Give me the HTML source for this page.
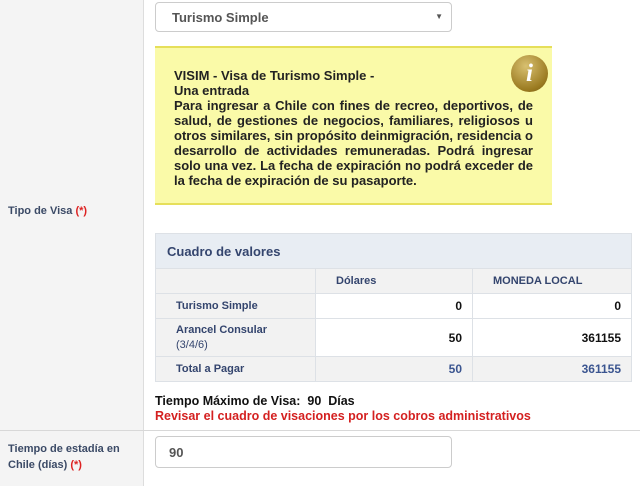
<!DOCTYPE html>
<html><head><meta charset="utf-8"><style>
*{box-sizing:border-box;margin:0;padding:0}
body{width:640px;height:486px;overflow:hidden;background:#fff;font-family:"Liberation Sans",Arial,sans-serif;position:relative}
.left{position:absolute;left:0;top:0;width:144px;height:486px;background:#f4f4f4;border-right:1px solid #ddd}
.hr{position:absolute;left:0;top:430px;width:640px;height:1px;background:#d8d8d8}
.lbl{position:absolute;left:8px;font-size:11px;font-weight:bold;color:#3b4a66;line-height:16px}
.lbl span{color:#d22}
.sel{position:absolute;left:155px;top:2px;width:297px;height:30px;border:1px solid #ccc;border-radius:4px;background:#fff;font-size:13px;font-weight:bold;color:#555;padding:7px 16px}
.sel i{position:absolute;right:8px;top:9px;font-style:normal;font-size:8px;color:#555}
.info{position:absolute;left:155px;top:46px;width:397px;height:159px;background:#fafaa8;border-top:2px solid #e6df5a;border-bottom:2px solid #e6df5a;padding:20px 19px 0 19px;font-size:13px;font-weight:bold;color:#222;line-height:15px;text-align:justify}
.ico{position:absolute;left:511px;top:55px;width:37px;height:37px;border-radius:50%;background:radial-gradient(circle at 40% 30%,#d8c070,#9a7a20 70%,#6e5410);color:#fff;font:italic bold 25px "Liberation Serif",serif;text-align:center;line-height:37px}
table{position:absolute;left:155px;top:233px;width:477px;border-collapse:collapse;font-size:11px;font-weight:bold;color:#34456e}
td{border:1px solid #dde1e6;height:25px;padding:0 20px}
.cap td{background:#e8edf3;height:35px;font-size:13px;color:#34456e;padding-left:11px}
.hd td{background:#f2f2f2}
.g{background:#f2f2f2}
.n{text-align:right;color:#111;font-size:12px;padding-right:10px}
.t .n{color:#3b5590}
.tx{position:absolute;left:155px;font-size:12.5px;font-weight:bold;line-height:15px}
.inp{position:absolute;left:155px;top:436px;width:297px;height:32px;border:1px solid #ccc;border-radius:4px;font-size:13px;font-weight:bold;color:#555;padding:8px 13px}
</style></head><body>
<div class="left"></div>
<div class="hr"></div>
<div class="lbl" style="top:203px">Tipo de Visa <span>(*)</span></div>
<div class="lbl" style="top:441px">Tiempo de estadía en<br>Chile (días) <span>(*)</span></div>
<div class="sel">Turismo Simple<i>▼</i></div>
<div class="info">VISIM - Visa de Turismo Simple -<br>Una entrada<br>Para ingresar a Chile con fines de recreo, deportivos, de salud, de gestiones de negocios, familiares, religiosos u otros similares, sin propósito deinmigración, residencia o desarrollo de actividades remuneradas. Podrá ingresar solo una vez. La fecha de expiración no podrá exceder de la fecha de expiración de su pasaporte.</div>
<div class="ico">i</div>
<table>
<tr class="cap"><td colspan="3">Cuadro de valores</td></tr>
<tr class="hd"><td style="width:160px"></td><td style="width:157px">Dólares</td><td>MONEDA LOCAL</td></tr>
<tr><td class="g">Turismo Simple</td><td class="n">0</td><td class="n">0</td></tr>
<tr><td class="g" style="height:38px;line-height:15px">Arancel Consular<br><span style="font-weight:normal">(3/4/6)</span></td><td class="n">50</td><td class="n">361155</td></tr>
<tr class="t"><td class="g">Total a Pagar</td><td class="n g">50</td><td class="n g">361155</td></tr>
</table>
<div class="tx" style="top:394px;color:#111">Tiempo Máximo de Visa:&nbsp; 90&nbsp; Días</div>
<div class="tx" style="top:409px;color:#d42020">Revisar el cuadro de visaciones por los cobros administrativos</div>
<div class="inp">90</div>
</body></html>
